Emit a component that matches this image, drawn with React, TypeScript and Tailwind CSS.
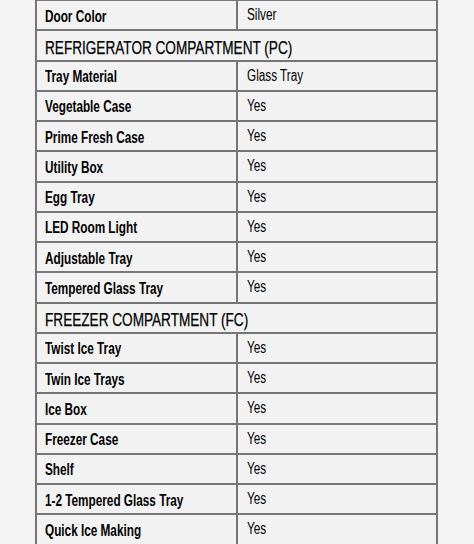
const rows: (string | [string, string])[] = [
  ["Door Color", "Silver"],
  "REFRIGERATOR COMPARTMENT (PC)",
  ["Tray Material", "Glass Tray"],
  ["Vegetable Case", "Yes"],
  ["Prime Fresh Case", "Yes"],
  ["Utility Box", "Yes"],
  ["Egg Tray", "Yes"],
  ["LED Room Light", "Yes"],
  ["Adjustable Tray", "Yes"],
  ["Tempered Glass Tray", "Yes"],
  "FREEZER COMPARTMENT (FC)",
  ["Twist Ice Tray", "Yes"],
  ["Twin Ice Trays", "Yes"],
  ["Ice Box", "Yes"],
  ["Freezer Case", "Yes"],
  ["Shelf", "Yes"],
  ["1-2 Tempered Glass Tray", "Yes"],
  ["Quick Ice Making", "Yes"],
];

// the source text is a condensed face; squeeze Liberation Sans to match
function Narrow({ children }: { children: React.ReactNode }) {
  return <span className="inline-block origin-left scale-x-[0.735] whitespace-nowrap">{children}</span>;
}

export default function App() {
  return (
    <div className="h-[544px] w-[474px] overflow-hidden bg-[#f4f4f4] pl-[35px] font-['Liberation_Sans',Arial,sans-serif] text-black">
      <table className="-mt-[1px] w-[403px] table-fixed border-collapse bg-[#f2f2f2]">
        <colgroup>
          <col className="w-[201px]" />
          <col />
        </colgroup>
        <tbody>
          {rows.map((row, i) =>
            typeof row === "string" ? (
              <tr key={i} className="h-[30.25px]">
                <td colSpan={2} className="border-2 border-[#767676] px-2 pt-[6px] text-[18.5px] leading-none [-webkit-text-stroke:0.25px_black]">
                  <Narrow>{row}</Narrow>
                </td>
              </tr>
            ) : (
              <tr key={i} className="h-[30.25px]">
                <td className="border-2 border-[#767676] px-2 pt-[3px] text-[16px] font-bold leading-none">
                  <Narrow>{row[0]}</Narrow>
                </td>
                <td className="border-2 border-[#767676] pl-[9px] text-[16px] leading-none">
                  <Narrow>{row[1]}</Narrow>
                </td>
              </tr>
            )
          )}
        </tbody>
      </table>
    </div>
  );
}
